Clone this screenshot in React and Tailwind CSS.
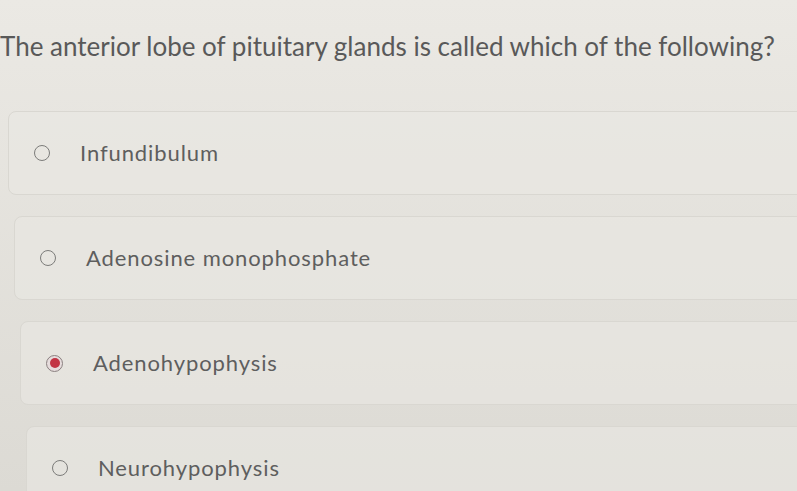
import React from 'react';

const options = [
  { label: 'Infundibulum', offset: 'ml-[8px]', selected: false },
  { label: 'Adenosine monophosphate', offset: 'ml-[14px]', selected: false },
  { label: 'Adenohypophysis', offset: 'ml-[20px]', selected: true },
  { label: 'Neurohypophysis', offset: 'ml-[26px]', selected: false },
];

function Radio({ selected }) {
  if (selected) {
    return (
      <span className="flex h-[17px] w-[17px] shrink-0 items-center justify-center rounded-full border-[1.5px] border-[#8a8080] bg-[#e6dcdc]">
        <span className="h-[10px] w-[10px] rounded-full bg-[#c23444]" />
      </span>
    );
  }
  return <span className="h-[16px] w-[16px] shrink-0 rounded-full border-[1.5px] border-[#7c7c7a]" />;
}

export default function App() {
  return (
    <div
      className="h-[491px] w-[797px] overflow-hidden bg-gradient-to-b from-[#ebe9e4] to-[#dcdad4] text-[#5b5b5b]"
      style={{ fontFamily: 'Lato, "Noto Sans", sans-serif' }}
    >
      {/* Question */}
      <h1 className="whitespace-nowrap pt-[28px] text-[26px] leading-[36px] text-[#595959]">
        The anterior lobe of pituitary glands is called which of the following?
      </h1>

      {/* Options */}
      <div className="mt-[47px] flex flex-col gap-[21px]">
        {options.map((opt) => (
          <div
            key={opt.label}
            className={`${opt.offset} -mr-10 flex h-[84px] items-center gap-[30px] rounded-lg border border-[#d9d7d1] bg-[#eae8e3]/60 pl-[25px]`}
          >
            <Radio selected={opt.selected} />
            <span className="text-[22px] leading-none tracking-[0.9px] text-[#5e5e5e]">{opt.label}</span>
          </div>
        ))}
      </div>
    </div>
  );
}
